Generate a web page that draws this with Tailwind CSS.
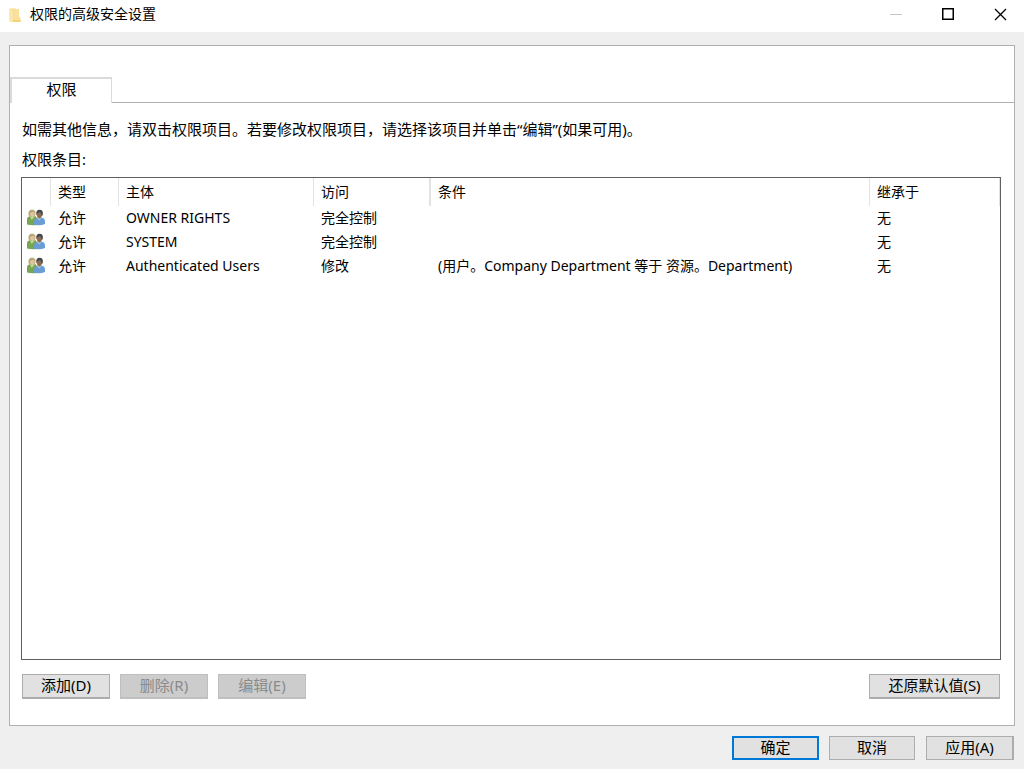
<!DOCTYPE html>
<html lang="zh-CN">
<head>
<meta charset="utf-8">
<meta name="viewport" content="width=device-width, initial-scale=1">
<title>权限的高级安全设置</title>
<script src="https://cdn.jsdelivr.net/npm/@tailwindcss/browser@4"></script>
</head>
<body class="flex min-h-screen flex-col bg-[#efefef] font-['Noto_Sans','Noto_Sans_CJK_SC',sans-serif] text-[15px] leading-5 text-black">
<svg class="hidden" aria-hidden="true">
  <symbol id="users" viewBox="0 0 18 17">
    <path d="M0 15.500V10Q0 7.800 2.500 7.200L4.500 6.800H8L10 9V16Q5 16.800 0 15.500Z" fill="#78a552"/>
    <path d="M2.800 7.200L4.800 11L7.800 7Z" fill="#c3d79a"/>
    <path d="M1.500 6.500Q.800 .800 5 .600Q9 .800 8.500 5.500L7.500 7Q4 8.500 1.500 6.500Z" fill="#b9a878"/>
    <path d="M3 4Q5.500 3.500 6.500 2.500Q8 3.500 7.500 5.500Q6.800 8 5.200 8Q3.200 7.500 3 4Z" fill="#dfc59c"/>
    <path d="M7 15.800V12.500Q7 10.200 9.500 9.200L11 8.600H14.500Q18 9.500 18 12.500V15Q13 17 7 15.800Z" fill="#699dd3"/>
    <path d="M10.200 9L12 11.500L14.800 8.700Z" fill="#a9cbea"/>
    <path d="M9.300 5Q8.800 .900 12.500 .700Q16.500 .900 15.800 5.500L14.800 7.500L10 6.500Z" fill="#45474a"/>
    <path d="M9.600 4.500Q11.500 4 12.700 3Q14.500 3.800 14.700 6Q14.200 9.600 12.200 9.600Q9.800 9 9.600 4.500Z" fill="#916d50"/>
  </symbol>
</svg>
<header class="flex h-8 shrink-0 items-center bg-white pr-4 pl-[9px]">
  <svg class="mr-2 h-4 w-3" viewBox="0 0 12 16" aria-hidden="true">
    <path d="M.500 .500H7V13H.500Z" fill="#f9dc85"/>
    <path d="M7 1H10V9H11.500V14H5V1Z" fill="#fae09a"/>
    <path d="M.500 .500L4 3V14.500L.500 13.500Z" fill="#fce7aa"/>
    <path d="M4 12H11.500V14H4Z" fill="#f4d27a"/>
  </svg>
  <h1 class="ml-px flex-1 pb-1 text-sm">权限的高级安全设置</h1>
  <button aria-label="最小化" class="mr-9 flex h-7 w-4 items-center justify-center pb-1" disabled><svg class="h-4 w-4" viewBox="0 0 16 16"><path d="M2 8.500H14" stroke="#c8c8c8"/></svg></button>
  <button aria-label="最大化" class="mr-9 flex h-7 w-4 items-center justify-center pb-1"><svg class="h-4 w-4" viewBox="0 0 16 16"><path d="M2.750 2.750H13.250V13.250H2.750Z" fill="none" stroke="#000" stroke-width="1.500"/></svg></button>
  <button aria-label="关闭" class="flex h-7 w-4 items-center justify-center pb-1"><svg class="h-4 w-4" viewBox="0 0 16 16"><path d="M3 3L14 14M14 3L3 14" fill="none" stroke="#000" stroke-width="1.300"/></svg></button>
</header>

<main class="mx-[9px] mt-[13px] flex flex-1 flex-col border border-[#b0b0b0] bg-white">
  <div class="flex h-[57px] shrink-0 items-end" role="tablist">
    <button role="tab" aria-selected="true" aria-controls="perm" id="tab" class="h-[26px] w-[102px] border-t-2 border-r border-l-2 border-[#dadada] bg-white pb-1">权限</button>
    <div class="flex-1 self-stretch border-b border-[#b0b0b0]"></div>
  </div>
  <section id="perm" role="tabpanel" aria-labelledby="tab" class="flex flex-1 flex-col px-3 pt-4 pb-[26px]">
    <p>如需其他信息，请双击权限项目。若要修改权限项目，请选择该项目并单击“编辑”(如果可用)。</p>
    <p id="entries" class="mt-[10px]">权限条目:</p>
    <div class="mr-px -ml-px mt-2 flex-1 border border-[#606060]">
      <table aria-labelledby="entries" class="w-full table-fixed border-separate border-spacing-0 text-left text-sm whitespace-nowrap">
        <colgroup><col class="w-[29px]"><col class="w-[68px]"><col class="w-[195px]"><col class="w-[117px]"><col><col class="w-[130px]"></colgroup>
        <thead>
          <tr class="h-7">
            <th class="border-r border-[#e2e2e2]"></th>
            <th class="border-r border-[#e2e2e2] pl-[7px] font-normal">类型</th>
            <th class="border-r border-[#e2e2e2] pl-[7px] font-normal">主体</th>
            <th class="border-r-2 border-[#e2e2e2] pl-[7px] font-normal">访问</th>
            <th class="border-r border-[#e2e2e2] pl-[7px] font-normal">条件</th>
            <th class="border-r border-[#e2e2e2] pl-[7px] font-normal">继承于</th>
          </tr>
        </thead>
        <tbody>
          <tr class="h-6">
            <td class="pb-[2px] pl-[5px]"><svg class="h-[17px] w-[18px]"><use href="#users"/></svg></td>
            <td class="pl-[7px]">允许</td><td class="pl-[7px]">OWNER RIGHTS</td><td class="pl-[7px]">完全控制</td><td></td><td class="pl-[7px]">无</td>
          </tr>
          <tr class="h-6">
            <td class="pb-[2px] pl-[5px]"><svg class="h-[17px] w-[18px]"><use href="#users"/></svg></td>
            <td class="pl-[7px]">允许</td><td class="pl-[7px]">SYSTEM</td><td class="pl-[7px]">完全控制</td><td></td><td class="pl-[7px]">无</td>
          </tr>
          <tr class="h-6">
            <td class="pb-[2px] pl-[5px]"><svg class="h-[17px] w-[18px]"><use href="#users"/></svg></td>
            <td class="pl-[7px]">允许</td><td class="pl-[7px]">Authenticated Users</td><td class="pl-[7px]">修改</td><td class="pl-[7px]">(用户。Company Department 等于 资源。Department)</td><td class="pl-[7px]">无</td>
          </tr>
        </tbody>
      </table>
    </div>
    <div class="mt-[14px] flex gap-[10px] pr-[2px]">
      <button class="h-[25px] w-[88px] border border-b-2 border-[#adadad] bg-[#e1e1e1] pb-px leading-none">添加(D)</button>
      <button disabled class="h-[25px] w-[88px] border border-b-2 border-[#bfbfbf] bg-[#cccccc] pb-px leading-none text-[#8a8a8a]">删除(R)</button>
      <button disabled class="h-[25px] w-[88px] border border-b-2 border-[#bfbfbf] bg-[#cccccc] pb-px leading-none text-[#8a8a8a]">编辑(E)</button>
      <button class="ml-auto h-[25px] w-[131px] border border-b-2 border-[#adadad] bg-[#e1e1e1] pb-px leading-none">还原默认值(S)</button>
    </div>
  </section>
</main>

<footer class="flex h-[43px] shrink-0 justify-end pt-[10px] pr-[10px]">
  <button class="mr-[10px] h-6 w-[87px] border-2 border-[#0078d7] bg-[#e1e1e1] pb-[2px] leading-none">确定</button>
  <button class="mr-[11px] h-6 w-[86px] border border-[#adadad] bg-[#e1e1e1] pb-[2px] leading-none">取消</button>
  <button class="h-6 w-[88px] border border-r-2 border-[#adadad] bg-[#e1e1e1] pb-[2px] leading-none">应用(A)</button>
</footer>
</body>
</html>
